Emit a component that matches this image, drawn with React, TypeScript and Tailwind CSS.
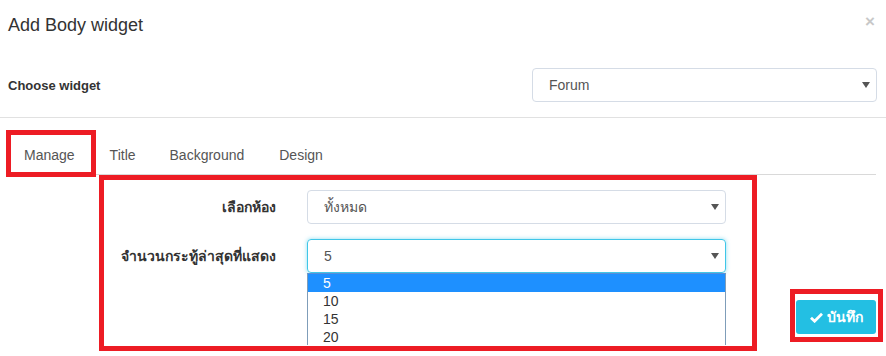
import React from 'react';

// Add Body widget modal with annotated (red boxes) Manage tab

const FONT = { fontFamily: '"Liberation Sans", "Noto Sans", Tahoma, sans-serif' };

function Caret() {
  return (
    <svg width="8" height="6" viewBox="0 0 8 6" className="absolute right-[6px] top-1/2 -translate-y-1/2">
      <path d="M0 0 L8 0 L4 6 Z" fill="#555" />
    </svg>
  );
}

export default function App() {
  return (
    <div className="relative w-[886px] h-[356px] bg-white overflow-hidden text-[#333]" style={FONT}>
      {/* Header */}
      <div className="flex items-center justify-between h-[50px] pl-2 pr-[11px]">
        <h4 className="text-[18px] text-[#333] mt-[1px]">Add Body widget</h4>
        <span className="text-[#c8c8c8] font-bold text-[17px] -mt-[6px]">×</span>
      </div>

      {/* Choose widget */}
      <div className="flex items-center justify-between h-[68px] pl-2 pr-[9px] border-b border-[#e1e1e1]">
        <span className="text-[13px] font-bold text-[#333] mt-[4px]">Choose widget</span>
        <div className="relative w-[345px] h-[34px] mt-[3px] border border-[#d5dce6] rounded-[4px] flex items-center pl-4 text-[14px] text-[#555]">
          Forum
          <Caret />
        </div>
      </div>

      {/* Tabs */}
      <div className="flex mx-2 mr-[10px] h-[57px] items-end pb-[8px] border-b border-[#d9d9d9] text-[14px] text-[#555]">
        <span className="ml-[16px]">Manage</span>
        <span className="ml-[35px]">Title</span>
        <span className="ml-[34px]">Background</span>
        <span className="ml-[35px]">Design</span>
      </div>

      {/* Form */}
      <div className="flex flex-col gap-[15px] mt-[15px] ml-[103px] w-[623px]">
        <div className="flex items-center">
          <label className="w-[173px] text-right text-[14px] font-bold text-[#333]">เลือกห้อง</label>
          <div className="relative ml-[31px] w-[419px] h-[34px] border border-[#d5dce6] rounded-[4px] flex items-center pl-4 text-[14px] text-[#555]">
            ทั้งหมด
            <Caret />
          </div>
        </div>
        <div className="flex items-center">
          <label className="w-[173px] text-right text-[14px] font-bold text-[#333]">จำนวนกระทู้ล่าสุดที่แสดง</label>
          <div className="relative ml-[31px] w-[419px] h-[34px] border border-[#3fc6e8] rounded-[4px] shadow-[0_0_4px_rgba(63,198,232,0.6)] flex items-center pl-4 text-[14px] text-[#555]">
            5
            <Caret />
            <div className="absolute left-[-1px] top-[33px] w-[419px] h-[72px] bg-white border border-[#7f9db9] border-t-[#5a8fd6] border-b-0 text-[14px] text-[#333] leading-[18px] overflow-hidden">
              <div className="bg-[#1e90ff] text-white pl-[15px]">5</div>
              <div className="pl-[15px]">10</div>
              <div className="pl-[15px]">15</div>
              <div className="pl-[15px]">20</div>
            </div>
          </div>
        </div>
      </div>

      {/* Save button */}
      <button className="absolute left-[796px] top-[300px] w-[80px] h-[34px] bg-[#23bfe3] rounded-[3px] text-white text-[14px] font-bold flex items-center justify-center gap-[4px]">
        <svg width="13" height="11" viewBox="0 0 13 11">
          <path d="M1 5.8 L4.6 9.2 L12 1.8" stroke="white" strokeWidth="2.8" fill="none" />
        </svg>
        บันทึก
      </button>

      {/* Annotation boxes */}
      <div className="absolute left-[6px] top-[130px] w-[90px] h-[47px] border-[5px] border-[#ed1c24]" />
      <div className="absolute left-[99px] top-[175px] w-[658px] h-[176px] border-[5px] border-[#ed1c24]" />
      <div className="absolute left-[790px] top-[289px] w-[93px] h-[53px] border-[5px] border-[#ed1c24]" />
    </div>
  );
}
